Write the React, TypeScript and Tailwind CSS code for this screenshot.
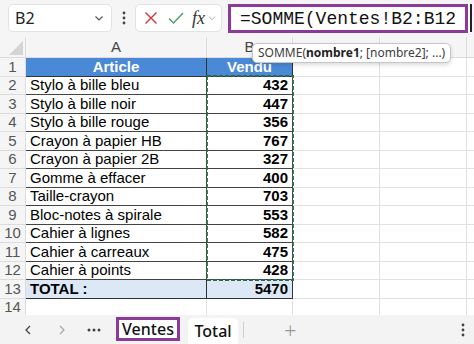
import React from "react";

const rows: [string, number][] = [
  ["Stylo à bille bleu", 432],
  ["Stylo à bille noir", 447],
  ["Stylo à bille rouge", 356],
  ["Crayon à papier HB", 767],
  ["Crayon à papier 2B", 327],
  ["Gomme à effacer", 400],
  ["Taille-crayon", 703],
  ["Bloc-notes à spirale", 553],
  ["Cahier à lignes", 582],
  ["Cahier à carreaux", 475],
  ["Cahier à points", 428],
];

const ui = { fontFamily: '"Noto Sans", "Open Sans", sans-serif' };
const cellFont = { fontFamily: '"Liberation Sans", Arial, sans-serif' };

function RowHead({ n }: { n: number }) {
  return (
    <div className="w-[26px] shrink-0 bg-[#f5f5f5] border-r border-b border-[#dcdcdc] flex items-center justify-center text-[15px] text-[#555]" style={cellFont}>
      {n}
    </div>
  );
}

function Blank() {
  return (
    <>
      <div className="w-[87px] shrink-0 border-r border-b border-[#e1e1e1]" />
      <div className="w-[87px] shrink-0 border-r border-b border-[#e1e1e1]" />
      <div className="flex-1 border-b border-[#e1e1e1]" />
    </>
  );
}

export default function App() {
  return (
    <div className="w-[474px] h-[344px] overflow-hidden bg-white flex flex-col">
      {/* toolbar */}
      <div className="h-[37px] shrink-0 bg-[#f5f5f5] flex items-start pt-[4px]" style={ui}>
        <div className="ml-[8px] w-[104px] h-[28px] bg-white border border-[#e2e2e2] rounded-[5px] flex items-center justify-between pl-[6px] pr-[6px]">
          <span className="text-[16px] text-[#222]">B2</span>
          <svg width="12" height="12" viewBox="0 0 12 12" fill="none" stroke="#555" strokeWidth="1.2"><path d="M2.5 4.5 6 8l3.5-3.5" /></svg>
        </div>
        <div className="w-[23px] h-[28px] flex items-center justify-center">
          <svg width="4" height="14" viewBox="0 0 4 14" fill="#444"><circle cx="2" cy="2" r="1.4" /><circle cx="2" cy="7" r="1.4" /><circle cx="2" cy="12" r="1.4" /></svg>
        </div>
        <div className="w-[87px] h-[28px] bg-white border border-[#e2e2e2] rounded-[5px] flex items-center pl-[6px]">
          <svg width="16" height="16" viewBox="0 0 16 16" fill="none" stroke="#d13438" strokeWidth="1.4" className="ml-[1px]"><path d="M2.5 2.5l11 11M13.5 2.5l-11 11" /></svg>
          <svg width="18" height="16" viewBox="0 0 18 16" fill="none" stroke="#4e9a66" strokeWidth="1.4" className="ml-[8px]"><path d="M2 8.5l4.5 4.5L16 3" /></svg>
          <span className="ml-[7px] text-[18px] italic text-[#333] leading-none" style={{ fontFamily: '"Liberation Serif", serif' }}>fx</span>
          <svg width="10" height="10" viewBox="0 0 12 12" fill="none" stroke="#aaa" strokeWidth="1.2" className="ml-[2px]"><path d="M2.5 4.5 6 8l3.5-3.5" /></svg>
        </div>
        <div className="ml-[6px] w-[240px] h-[29px] border-[3px] border-[#8b3a97] bg-white flex items-center pl-[9px]">
          <span className="text-[18px] text-[#111] leading-none whitespace-nowrap" style={{ fontFamily: '"Liberation Mono", "DejaVu Sans Mono", monospace' }}>=SOMME(Ventes!B2:B12</span>
        </div>
        <div className="ml-[2px] w-[2px] h-[28px] bg-[#222]" />
      </div>

      {/* grid */}
      <div className="relative flex-1 overflow-hidden">
        {/* column headers */}
        <div className="flex h-[21px] bg-[#f5f5f5] text-[15px] text-[#444]" style={cellFont}>
          <div className="w-[26px] shrink-0 border-r border-b border-[#dcdcdc] flex items-end justify-end p-[2px]">
            <svg width="14" height="14" viewBox="0 0 14 14"><path d="M14 0V14H0Z" fill="#d4d4d4" /></svg>
          </div>
          <div className="w-[181px] shrink-0 border-r border-b border-[#dcdcdc] flex items-center justify-center">A</div>
          <div className="w-[86px] shrink-0 border-r border-b border-[#dcdcdc] flex items-center justify-center">B</div>
          <div className="w-[87px] shrink-0 border-r border-b border-[#dcdcdc]" />
          <div className="w-[87px] shrink-0 border-r border-b border-[#dcdcdc]" />
          <div className="flex-1 border-b border-[#dcdcdc]" />
        </div>

        {/* row 1 */}
        <div className="flex h-[18.5px]" style={cellFont}>
          <RowHead n={1} />
          <div className="w-[181px] shrink-0 bg-[#4a89d5] border-r border-b border-[#333] flex items-center justify-center text-[15px] font-bold text-white">Article</div>
          <div className="w-[86px] shrink-0 bg-[#4a89d5] border-r border-b border-[#333] flex items-center justify-center text-[15px] font-bold text-white">Vendu</div>
          <Blank />
        </div>

        {rows.map(([name, v], i) => (
          <div key={name} className="flex h-[18.5px]" style={cellFont}>
            <RowHead n={i + 2} />
            <div className="w-[181px] shrink-0 border-r border-b border-[#444] flex items-center pl-[4px] text-[15px] text-black whitespace-nowrap">{name}</div>
            <div className="w-[86px] shrink-0 border-r border-b border-[#444] flex items-center justify-end pr-[4px] text-[15px] font-bold text-black">{v}</div>
            <Blank />
          </div>
        ))}

        {/* row 13 */}
        <div className="flex h-[18.5px]" style={cellFont}>
          <RowHead n={13} />
          <div className="w-[181px] shrink-0 bg-[#dce8f6] border-r border-b border-[#333] flex items-center pl-[4px] text-[15px] font-bold text-black">TOTAL :</div>
          <div className="w-[86px] shrink-0 bg-[#dce8f6] border-r border-b border-[#333] flex items-center justify-end pr-[4px] text-[15px] font-bold text-black">5470</div>
          <Blank />
        </div>

        {/* row 14 */}
        <div className="flex h-[18.5px]" style={cellFont}>
          <RowHead n={14} />
          <div className="w-[181px] shrink-0 border-r border-b border-[#e1e1e1]" />
          <div className="w-[86px] shrink-0 border-r border-b border-[#e1e1e1]" />
          <Blank />
        </div>

        {/* marching ants */}
        <svg className="absolute left-[206px] top-[38px]" width="88" height="206" viewBox="0 0 88 206">
          <rect x="1" y="1" width="86" height="204" fill="none" stroke="#2b6a45" strokeWidth="1.8" strokeDasharray="4 2" />
        </svg>

        {/* tooltip */}
        <div className="absolute left-[252px] top-[6px] h-[20px] px-[5px] bg-white border border-[#c6c6c6] rounded-[5px] shadow-[0_2px_4px_rgba(0,0,0,0.15)] flex items-center text-[12px] text-[#3c3c3c] whitespace-nowrap" style={ui}>
          SOMME(<span className="font-bold text-[#222]">nombre1</span>; [nombre2]; ...)
        </div>
      </div>

      {/* tab bar */}
      <div className="h-[29px] shrink-0 bg-[#f3f3f3] flex items-center relative" style={ui}>
        <div className="w-[56px] flex justify-center">
          <svg width="12" height="12" viewBox="0 0 12 12" fill="none" stroke="#444" strokeWidth="1.3"><path d="M8 2 4 6l4 4" /></svg>
        </div>
        <div className="w-[12px] flex justify-center">
          <svg width="12" height="12" viewBox="0 0 12 12" fill="none" stroke="#aaa" strokeWidth="1.3"><path d="M4 2l4 4-4 4" /></svg>
        </div>
        <div className="w-[52px] flex justify-center">
          <svg width="14" height="4" viewBox="0 0 14 4" fill="#444"><circle cx="2" cy="2" r="1.5" /><circle cx="7" cy="2" r="1.5" /><circle cx="12" cy="2" r="1.5" /></svg>
        </div>
        <div className="ml-[-4px] w-[64px] h-[24px] self-start mt-[2px] border-[3px] border-[#8b3a97] bg-white flex items-center justify-center text-[16px] text-[#111] font-medium">Ventes</div>
        <div className="ml-[8px] w-[50px] h-[26px] self-end bg-white rounded-t-[5px] flex items-center justify-center text-[16px] text-[#111] font-medium">Total</div>
        <div className="ml-[5px] w-[1px] h-[16px] bg-[#cfcfcf]" />
        <div className="ml-[40px] text-[22px] text-[#999] leading-none font-light">+</div>
        <div className="ml-auto mr-[9px]">
          <svg width="4" height="14" viewBox="0 0 4 14" fill="#444"><circle cx="2" cy="2" r="1.4" /><circle cx="2" cy="7" r="1.4" /><circle cx="2" cy="12" r="1.4" /></svg>
        </div>
      </div>
    </div>
  );
}
